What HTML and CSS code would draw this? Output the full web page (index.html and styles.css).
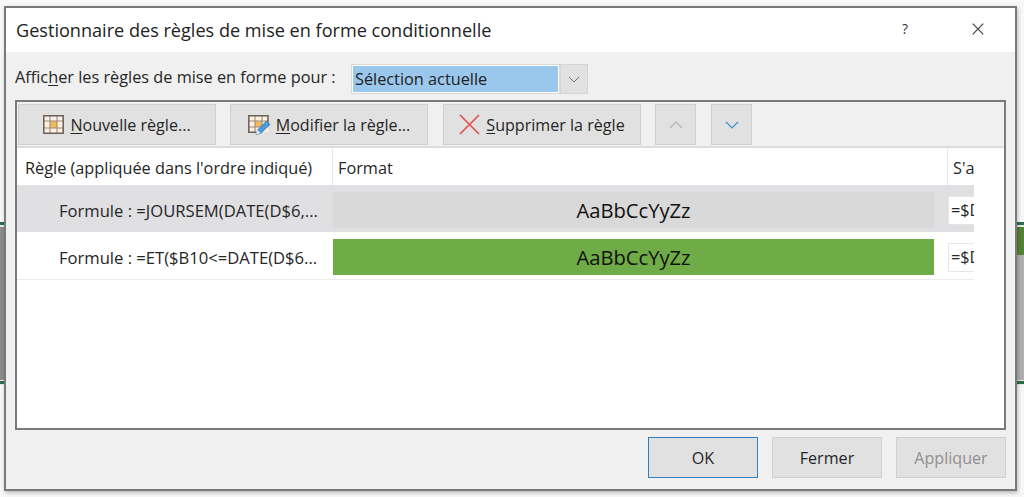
FILE: index.html
```html
<!DOCTYPE html>
<html lang="fr">
<head>
<meta charset="utf-8">
<title>Gestionnaire des règles</title>
<link rel="stylesheet" href="styles.css">
</head>
<body>
<div class="backdrop">
  <div class="strip left">
    <div class="s-line"></div>
    <div class="s-grey"></div>
    <div class="s-line low"></div>
  </div>
  <div class="strip right">
    <div class="s-line"></div>
    <div class="s-green"></div>
    <div class="s-grey short"></div>
    <div class="s-line low"></div>
  </div>
</div>
<main class="dialog">
  <header class="titlebar">
    <div class="title">Gestionnaire des règles de mise en forme conditionnelle</div>
    <div class="help">?</div>
    <svg class="close" width="12" height="12" viewBox="0 0 12 12"><path d="M.7 .7L11.3 11.3M11.3 .7L.7 11.3" stroke="#3c3c3c" stroke-width="1.1" fill="none"/></svg>
  </header>
  <section class="body">
    <div class="showrow">
      <span class="showlabel">Affic<u>h</u>er les règles de mise en forme pour :</span>
      <div class="combo">
        <div class="combo-field"><span class="combo-sel">Sélection actuelle</span></div>
        <div class="combo-btn"><svg width="12" height="7" viewBox="0 0 12 7"><path d="M1 1L6 6L11 1" stroke="#777" fill="none"/></svg></div>
      </div>
    </div>
    <div class="panel">
      <div class="toolbar">
        <button class="btn b-new">
          <svg class="ico" width="21" height="19" viewBox="0 0 21 19">
            <rect x="1" y="1" width="19" height="17" fill="#fdf1de"/>
            <rect x="1" y="1" width="19" height="4" fill="#f5f0ea"/>
            <rect x="7" y="6" width="7" height="7" fill="#f7b95c"/>
            <path d="M7 1V18M14 1V18M1 6H20M1 13H20" stroke="#9a8a80" stroke-width="1.1" fill="none"/>
            <path d="M.8 .8H20.2V18.2H.8Z" stroke="#6b5f58" stroke-width="1.5" fill="none"/>
          </svg>
          <span><u>N</u>ouvelle règle...</span>
        </button>
        <button class="btn b-edit">
          <svg class="ico" width="23" height="20" viewBox="0 0 23 20">
            <rect x="1" y="1" width="19" height="16" fill="#fdf1de"/>
            <rect x="7" y="6" width="7" height="6" fill="#f7b95c"/>
            <path d="M7 1V17M14 1V12M1 6H20M1 12H15" stroke="#9a8a80" stroke-width="1.1" fill="none"/>
            <path d="M20 9V.8H.8V17.2H8" stroke="#6b5f58" stroke-width="1.5" fill="none"/>
            <path d="M8 19.5L9.5 15L18.5 6L22 9.5L13 18.2Z" fill="#4a9bd9" stroke="#2a72ad" stroke-width=".7"/>
            <path d="M8 19.5L9.5 15L12.5 18Z" fill="#f4f4f4"/>
          </svg>
          <span><u>M</u>odifier la règle...</span>
        </button>
        <button class="btn b-del">
          <svg class="ico" width="21" height="21" viewBox="0 0 21 21"><path d="M1 1L20 20M20 1L1 20" stroke="#e2504c" stroke-width="1.7" fill="none"/></svg>
          <span><u>S</u>upprimer la règle</span>
        </button>
        <button class="btn b-arrow" aria-label="Monter"><svg width="14" height="8" viewBox="0 0 14 8"><path d="M1 7L7 1L13 7" stroke="#b4b4b4" stroke-width="1.1" fill="none"/></svg></button>
        <button class="btn b-arrow" aria-label="Descendre"><svg width="14" height="8" viewBox="0 0 14 8"><path d="M1 1L7 7L13 1" stroke="#3f8fcc" stroke-width="1.2" fill="none"/></svg></button>
      </div>
      <div class="table">
        <div class="tclip">
          <div class="thead">
            <div class="c-rule">Règle (appliquée dans l'ordre indiqué)</div>
            <div class="c-format">Format</div>
            <div class="c-app">S'a</div>
          </div>
          <div class="trow selected">
            <div class="c-rule formula">Formule : =JOURSEM(DATE(D$6,...</div>
            <div class="c-format"><div class="swatch grey">AaBbCcYyZz</div></div>
            <div class="c-app"><div class="ref">=$D</div></div>
          </div>
          <div class="trow">
            <div class="c-rule formula">Formule : =ET($B10&lt;=DATE(D$6...</div>
            <div class="c-format"><div class="swatch green">AaBbCcYyZz</div></div>
            <div class="c-app"><div class="ref">=$D</div></div>
          </div>
        </div>
      </div>
    </div>
    <footer class="actions">
      <button class="btn act ok">OK</button>
      <button class="btn act">Fermer</button>
      <button class="btn act off">Appliquer</button>
    </footer>
  </section>
</main>
</body>
</html>
```

FILE: styles.css
```css
* { box-sizing: border-box; }
html, body { margin: 0; height: 100%; }
body {
  position: relative;
  width: 1024px;
  height: 497px;
  overflow: hidden;
  background: #f8f8f8;
  font-family: "Open Sans", "Noto Sans", sans-serif;
  color: #262626;
  padding: 6px 0 0 4px;
}
.backdrop { position: absolute; inset: 0; }
.strip { position: absolute; top: 222px; height: 163px; background: #e9e9e9; }
.strip.left { left: 0; width: 6px; }
.strip.right { right: 0; width: 9px; }
.s-line { height: 3px; background: #2c6e4a; }
.s-grey { position: absolute; top: 5px; left: 0; right: 0; height: 153px; background: #8c8c8c; }
.s-grey.short { top: 33px; height: 125px; background: #b0b0b0; }
.s-green { position: absolute; top: 5px; left: 0; right: 0; height: 28px; background: #548235; }
.s-line.low { position: absolute; top: 159px; left: 0; right: 0; }

.dialog {
  position: relative;
  width: 1013px;
  height: 485px;
  border: 2px solid #7a7a7a;
  background: #f0f0f0;
  box-shadow: 1px 2px 4px rgba(0,0,0,.25);
  display: flex;
  flex-direction: column;
}
.titlebar {
  height: 44px;
  flex: none;
  background: #fff;
  display: flex;
  align-items: center;
  padding-left: 10px;
}
.title { font-size: 18.1px; flex: 1; color: #222; white-space: nowrap; padding-bottom: 1px; }
.help { font-size: 14px; width: 14px; margin-right: 60px; text-align: center; color: #333; padding-bottom: 3px; }
.close { margin-right: 31px; margin-bottom: 3px; }

.body { flex: 1; display: flex; flex-direction: column; padding: 0 9px; min-height: 0; }
.showrow { height: 48px; flex: none; display: flex; align-items: center; padding-top: 6px; }
.showlabel { font-size: 16.3px; width: 336px; white-space: nowrap; margin-top: -5px; }
.showlabel u, .btn u { text-decoration-thickness: 1px; text-underline-offset: 2px; }
.combo { display: flex; height: 30px; width: 237px; }
.combo-field { flex: 1; border: 1px solid #d8d8d8; background: #fff; padding: 1px; }
.combo-sel { display: block; height: 100%; background: #9ac7ec; font-size: 16.3px; padding-left: 2px; line-height: 27px; color: #222; }
.combo-btn { width: 28px; background: #e1e1e1; border: 1px solid #d4d4d4; display: flex; align-items: center; justify-content: center; }

.panel {
  height: 330px;
  flex: none;
  width: 991px;
  border: 2px solid #7a7a7a;
  background: #fff;
  display: flex;
  flex-direction: column;
}
.toolbar {
  height: 46px;
  flex: none;
  background: #f0f0f0;
  border-bottom: 2px solid #dcdcdc;
  display: flex;
  align-items: flex-start;
  padding: 2px 0 0 1px;
}
.btn {
  font: inherit;
  color: #262626;
  background: #e1e1e1;
  border: 1px solid #cfcfcf;
  height: 41px;
  padding: 0;
  display: flex;
  align-items: center;
  justify-content: center;
  font-size: 16.1px;
  white-space: nowrap;
}
.ico { margin-right: 6px; flex: none; }
.b-edit .ico { margin-right: 5px; }
.b-new { width: 198px; margin-right: 14px; }
.b-edit { width: 198px; margin-right: 15px; }
.b-del { width: 198px; margin-right: 14px; }
.b-arrow { width: 41px; margin-right: 15px; }

.table { flex: 1; min-height: 0; }
.tclip { width: 957px; overflow: hidden; }
.thead { display: flex; height: 37px; align-items: center; font-size: 16.3px; }
.thead .c-rule { padding-left: 8px; border-right: 1px solid #e6e6e6; height: 100%; line-height: 40px; }
.thead .c-format { padding-left: 5px; border-right: 1px solid #e6e6e6; height: 100%; line-height: 40px; }
.thead .c-app { padding-left: 5px; line-height: 40px; height: 100%; }
.c-rule { width: 316px; flex: none; white-space: nowrap; }
.c-format { width: 615px; flex: none; }
.c-app { width: 27px; flex: none; white-space: nowrap; overflow: hidden; }
.trow { display: flex; height: 48px; align-items: center; border-bottom: 1px solid #ececec; padding-top: 3px; }
.trow.selected { background: #e0e0e3; border-bottom: 0; height: 47px; }
.formula { padding-left: 42px; font-size: 16.6px; margin-top: 1px; }
.swatch { height: 36px; width: 601px; display: flex; align-items: center; justify-content: center; font-size: 20.2px; color: #111; }
.swatch.grey { background: #d9d9d9; }
.swatch.green { background: #6fab46; }
.ref { background: #fff; border: 1px solid #e6e6e6; border-right: 0; height: 29px; line-height: 27px; font-size: 16.3px; padding-left: 2px; overflow: hidden; }

.actions { display: flex; justify-content: flex-end; padding-top: 7px; gap: 14px; }
.act { width: 110px; height: 41px; }
.ok { border: 1px solid #2f7fc1; }
.off { color: #8f8f8f; }
```
